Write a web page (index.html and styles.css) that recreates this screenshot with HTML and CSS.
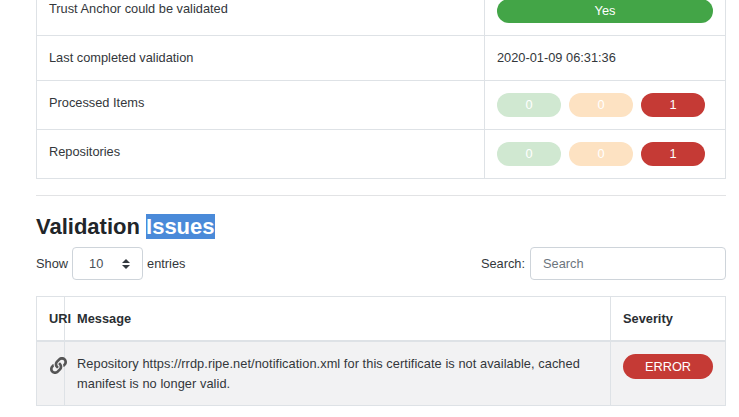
FILE: index.html
```html
<!DOCTYPE html>
<html lang="en">
<head>
<meta charset="utf-8">
<title>Validation Details</title>
<link rel="stylesheet" href="styles.css">
</head>
<body>
<main class="page">
  <table class="details">
    <colgroup><col class="details-label"><col></colgroup>
    <tbody>
      <tr>
        <td>Trust Anchor could be validated</td>
        <td><span class="pill pill-wide pill-short pill-green">Yes</span></td>
      </tr>
      <tr>
        <td>Last completed validation</td>
        <td>2020-01-09 06:31:36</td>
      </tr>
      <tr>
        <td>Processed Items</td>
        <td>
          <div class="counts">
            <span class="pill pill-count pill-green-light">0</span>
            <span class="pill pill-count pill-orange-light">0</span>
            <span class="pill pill-count pill-red">1</span>
          </div>
        </td>
      </tr>
      <tr>
        <td>Repositories</td>
        <td>
          <div class="counts">
            <span class="pill pill-count pill-green-light">0</span>
            <span class="pill pill-count pill-orange-light">0</span>
            <span class="pill pill-count pill-red">1</span>
          </div>
        </td>
      </tr>
    </tbody>
  </table>

  <hr class="rule">

  <h2 class="title">Validation <span class="selected">Issues</span></h2>

  <div class="controls">
    <div class="length">
      <span>Show</span>
      <div class="select">
        <span>10</span>
        <svg class="sort" viewBox="0 0 8 10" aria-hidden="true"><path d="M4 0 L8 4 H0 Z M0 6 H8 L4 10 Z"/></svg>
      </div>
      <span>entries</span>
    </div>
    <label class="search">
      <span>Search:</span>
      <input class="search-input" type="text" placeholder="Search">
    </label>
  </div>

  <table class="issues">
    <colgroup><col class="col-uri"><col><col class="col-severity"></colgroup>
    <thead>
      <tr><th>URI</th><th>Message</th><th>Severity</th></tr>
    </thead>
    <tbody>
      <tr>
        <td class="uri">
          <svg class="link" viewBox="0 0 512 512" aria-hidden="true"><path d="M326.612 185.391c59.747 59.809 58.927 155.698.36 214.59-.11.12-.24.25-.36.37l-67.2 67.2c-59.27 59.27-155.699 59.262-214.96 0-59.27-59.26-59.27-155.7 0-214.96l37.106-37.106c9.84-9.84 26.786-3.3 27.294 10.606.648 17.722 3.826 35.527 9.69 52.721 1.986 5.822.567 12.262-3.783 16.612l-13.087 13.087c-28.026 28.026-28.905 73.66-1.155 101.96 28.024 28.579 74.086 28.749 102.325.51l67.2-67.19c28.191-28.191 28.073-73.757 0-101.83-3.701-3.694-7.429-6.564-10.341-8.569a16.037 16.037 0 0 1-6.947-12.606c-.396-10.567 3.348-21.456 11.698-29.806l21.054-21.055c5.521-5.521 14.182-6.199 20.584-1.731a152.482 152.482 0 0 1 20.522 17.197zM467.547 44.449c-59.261-59.262-155.69-59.27-214.96 0l-67.2 67.2c-.12.12-.25.25-.36.37-58.566 58.892-59.387 154.781.36 214.59a152.454 152.454 0 0 0 20.521 17.196c6.402 4.468 15.064 3.789 20.584-1.731l21.054-21.055c8.35-8.35 12.094-19.239 11.698-29.806a16.037 16.037 0 0 0-6.947-12.606c-2.912-2.005-6.64-4.875-10.341-8.569-28.073-28.073-28.191-73.639 0-101.83l67.2-67.19c28.239-28.239 74.3-28.069 102.325.51 27.75 28.3 26.872 73.934-1.155 101.96l-13.087 13.087c-4.35 4.35-5.769 10.79-3.783 16.612 5.864 17.194 9.042 34.999 9.69 52.721.509 13.906 17.454 20.446 27.294 10.606l37.106-37.106c59.271-59.259 59.271-155.699.001-214.959z"/></svg>
        </td>
        <td class="message">Repository https://rrdp.ripe.net/notification.xml for this certificate is not available, cached manifest is no longer valid.</td>
        <td><span class="pill pill-wide pill-red">ERROR</span></td>
      </tr>
    </tbody>
  </table>
</main>
</body>
</html>
```

FILE: styles.css
```css
* {
  box-sizing: border-box;
}

html,
body {
  height: 100%;
  margin: 0;
  overflow: hidden;
  background: #fff;
}

body {
  font-family: "Liberation Sans", Arial, sans-serif;
  font-size: 12.8px;
  line-height: 20px;
  color: #33373b;
}

.page {
  margin: -14px 13px 0 36px;
}

table {
  width: 100%;
  table-layout: fixed;
  border-collapse: collapse;
}

td,
th {
  padding: 12px;
  border: 1px solid #dee2e6;
  text-align: left;
  vertical-align: top;
}

.details-label {
  width: 448px;
}

.counts {
  display: flex;
  gap: 8px;
}

.pill {
  display: inline-block;
  height: 25px;
  border-radius: 13px;
  line-height: 25px;
  text-align: center;
  color: #fff;
  vertical-align: top;
}

.pill-wide {
  display: block;
  width: 100%;
}

.pill-short {
  height: 24px;
  line-height: 24px;
}

.pill-count {
  width: 64px;
  height: 24px;
  line-height: 24px;
}

.pill-green {
  background: #43a547;
}

.pill-green-light {
  background: #d0e8d1;
}

.pill-orange-light {
  background: #fde2c2;
}

.pill-red {
  background: #c53a35;
}

.rule {
  height: 0;
  margin: 16px 0 18px;
  border: 0;
  border-top: 1px solid #e2e3e5;
}

.title {
  margin: 0 0 7px;
  font-size: 22px;
  line-height: 26px;
  font-weight: 700;
  color: #212529;
}

.selected {
  background: #4a8ad9;
  color: #fff;
}

.controls {
  display: flex;
  justify-content: space-between;
  align-items: center;
  margin-bottom: 16px;
}

.length,
.search {
  display: flex;
  align-items: center;
}

.select {
  display: flex;
  align-items: center;
  justify-content: space-between;
  width: 71px;
  height: 33px;
  margin: 0 4px;
  padding: 0 12px 0 16px;
  border: 1px solid #ced4da;
  border-radius: 4px;
  color: #495057;
}

.sort {
  width: 8px;
  height: 10px;
  fill: #343a40;
}

.search-input {
  width: 196px;
  height: 33px;
  margin-left: 5px;
  padding: 0 12px;
  border: 1px solid #ced4da;
  border-radius: 4px;
  font: inherit;
  color: #495057;
}

.search-input::placeholder {
  color: #6c757d;
  opacity: 1;
}

.col-uri {
  width: 28px;
}

.col-severity {
  width: 115px;
}

.issues th {
  padding-bottom: 11px;
  border-bottom-width: 2px;
  font-weight: 700;
  color: #2a2e32;
  white-space: nowrap;
  overflow: visible;
}

.issues tbody td {
  height: 63px;
  padding-bottom: 11px;
  background: #f2f2f3;
}

.issues .message {
  letter-spacing: 0.06px;
}

.issues .uri {
  padding: 0;
  overflow: visible;
}

.link {
  display: block;
  width: 17px;
  height: 17px;
  margin: 15px 0 0 13px;
  fill: #555;
}
```
